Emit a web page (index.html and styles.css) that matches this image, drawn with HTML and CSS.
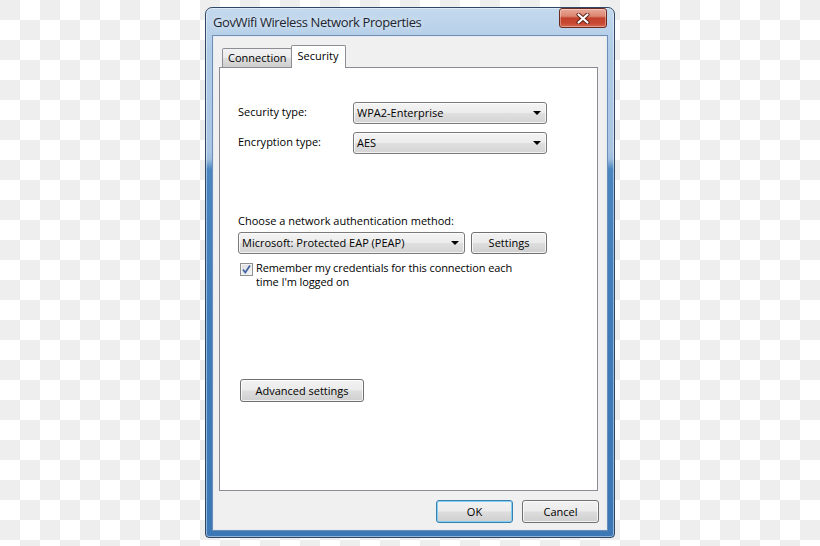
FILE: index.html
```html
<!DOCTYPE html>
<html>
<head>
<meta charset="utf-8">
<link rel="stylesheet" href="styles.css">
</head>
<body>
<div class="window">
  <div class="titlebar">
    <span class="title">GovWifi Wireless Network Properties</span>
    <div class="close">
      <svg width="14" height="11" viewBox="0 0 14 11"><path d="M2.5 1.5 L11.5 9.5 M11.5 1.5 L2.5 9.5" stroke="#5a1e16" stroke-width="4" stroke-linecap="round"/><path d="M2.5 1.5 L11.5 9.5 M11.5 1.5 L2.5 9.5" stroke="#ffffff" stroke-width="2.2" stroke-linecap="round"/></svg>
    </div>
  </div>
  <div class="client">
    <div class="tabs">
      <div class="tab">Connection</div>
      <div class="tab active">Security</div>
    </div>
    <div class="panel">
      <div class="form-grid">
        <span class="label">Security type:</span>
        <div class="combo"><span class="combo-text">WPA2-Enterprise</span><span class="arrow"></span></div>
        <span class="label">Encryption type:</span>
        <div class="combo"><span class="combo-text">AES</span><span class="arrow"></span></div>
      </div>
      <div class="auth-label">Choose a network authentication method:</div>
      <div class="auth-row">
        <div class="combo auth"><span class="combo-text">Microsoft: Protected EAP (PEAP)</span><span class="arrow"></span></div>
        <div class="btn settings">Settings</div>
      </div>
      <div class="check-row">
        <span class="checkbox"><svg width="11" height="11" viewBox="0 0 11 11"><path d="M2 5.5 L4.3 8.5 L9 1.5" fill="none" stroke="#4364a3" stroke-width="1.8"/></svg></span>
        <span class="check-text">Remember my credentials for this connection each<br>time I'm logged on</span>
      </div>
      <div class="btn advanced">Advanced settings</div>
    </div>
    <div class="footer">
      <div class="btn ok">OK</div>
      <div class="btn cancel">Cancel</div>
    </div>
  </div>
</div>
</body>
</html>
```

FILE: styles.css
```css
* { box-sizing: border-box; }
html, body { margin: 0; padding: 0; }
body {
  width: 820px;
  height: 546px;
  overflow: hidden;
  background: repeating-conic-gradient(#ffffff 0 25%, #eeeeee 0 50%) 0 0 / 40px 40px;
  font-family: "Open Sans", "Noto Sans", sans-serif;
  font-size: 11px;
  color: #000;
  padding-top: 7px;
}
.window {
  margin-left: 205px;
  width: 410px;
  height: 531px;
  border: 1px solid #2f4866;
  border-radius: 7px 7px 4px 4px;
  background: linear-gradient(180deg, #c3d9ee 0, #b0cbe6 8%, #a9c5e2 27%, #9ebedf 28.5%, #4a85c0 30.5%, #3f7bb9 60%, #3c78b6 100%);
  box-shadow: inset 0 0 0 1px rgba(255,255,255,0.45);
  padding: 0 7px 7px;
  display: flex;
  flex-direction: column;
}
.titlebar {
  height: 28px;
  display: flex;
  align-items: flex-start;
  justify-content: space-between;
}
.title {
  font-family: "Open Sans", "Noto Sans", sans-serif;
  font-size: 13px;
  letter-spacing: -0.4px;
  line-height: 16px;
  margin-top: 6px;
  color: #1e2530;
  text-shadow: 0 0 6px rgba(255,255,255,0.9);
}
.close {
  width: 48px;
  height: 20px;
  margin-top: 0;
  border: 1px solid #6b2a20;
  border-radius: 3px;
  background: linear-gradient(180deg, #e9a999 0, #dc8671 40%, #c3412b 50%, #c84a32 80%, #d86a4f 100%);
  box-shadow: inset 0 0 0 1px rgba(255,255,255,0.35);
  display: flex;
  align-items: center;
  justify-content: center;
}
.client {
  flex: 1;
  background: #f0f0f0;
  border: 1px solid #e4ebf3;
  box-shadow: 0 0 0 1px #6d8fb5;
  display: flex;
  flex-direction: column;
}
.tabs {
  display: flex;
  align-items: flex-end;
  padding: 8px 0 0 8px;
  height: 30px;
  position: relative;
  z-index: 1;
}
.tab {
  height: 19px;
  padding: 0 4px 0 5px;
  line-height: 18px;
  border: 1px solid #8c8e94;
  border-bottom: none;
  background: linear-gradient(180deg, #f2f2f2 0, #ebebeb 50%, #dddddd 51%, #cfcfcf 100%);
  color: #000;
  border-radius: 2px 2px 0 0;
}
.tab + .tab { border-left: none; }
.tab.active {
  height: 23px;
  margin-bottom: -1px;
  background: #ffffff;
  border-left: 1px solid #8c8e94;
  margin-left: -1px;
  padding: 0 7px 0 6px;
  line-height: 19px;
}
.panel {
  height: 424px;
  margin: 0 8px 0 5px;
  border: 1px solid #898c95;
  background: #ffffff;
  padding: 34px 18px 0 18px;
}
.form-grid {
  display: grid;
  grid-template-columns: 115px 194px;
  grid-auto-rows: 22px;
  row-gap: 8px;
  align-items: center;
}
.label { padding-bottom: 3px; line-height: 14px; }
.combo {
  height: 22px;
  border: 1px solid #7a7a7a;
  border-radius: 3px;
  background: linear-gradient(180deg, #f4f4f4 0, #ececec 48%, #dfdfdf 52%, #d4d4d4 100%);
  box-shadow: inset 0 0 0 1px rgba(255,255,255,0.7);
  display: flex;
  align-items: center;
  justify-content: space-between;
  padding: 0 4px 0 3px;
}
.combo-text { line-height: 14px; }
.arrow {
  width: 0;
  height: 0;
  border-left: 4px solid transparent;
  border-right: 4px solid transparent;
  border-top: 4px solid #000;
  margin-right: 1px;
}
.auth-label {
  margin-top: 60px;
  line-height: 14px;
}
.auth-row {
  margin-top: 4px;
  display: flex;
  gap: 6px;
}
.combo.auth { width: 227px; }
.btn {
  height: 22px;
  border: 1px solid #707070;
  border-radius: 3px;
  background: linear-gradient(180deg, #f2f2f2 0, #ebebeb 48%, #dddddd 52%, #cfcfcf 100%);
  box-shadow: inset 0 0 0 1px rgba(255,255,255,0.75);
  display: flex;
  align-items: center;
  justify-content: center;
  line-height: 14px;
}
.btn.settings { width: 76px; }
.check-row {
  margin-top: 7px;
  margin-left: 2px;
  display: flex;
  gap: 3px;
  align-items: flex-start;
}
.checkbox {
  width: 13px;
  height: 13px;
  margin-top: 2px;
  border: 1px solid #8e8f8f;
  background: linear-gradient(135deg, #dcdcdc 0, #f6f6f6 100%);
  box-shadow: inset 0 0 0 1px #f4f4f4;
  display: flex;
  align-items: center;
  justify-content: center;
  flex: none;
}
.check-text { line-height: 14px; letter-spacing: -0.1px; }
.btn.advanced {
  width: 124px;
  height: 23px;
  margin-top: 90px;
  margin-left: 2px;
}
.footer {
  display: flex;
  justify-content: flex-end;
  gap: 9px;
  padding: 9px 7px 0 0;
}
.footer .btn { width: 77px; height: 23px; }
.btn.ok {
  border-color: #3c7fb1;
  box-shadow: inset 0 0 0 1px #7fd0f5;
}
```
